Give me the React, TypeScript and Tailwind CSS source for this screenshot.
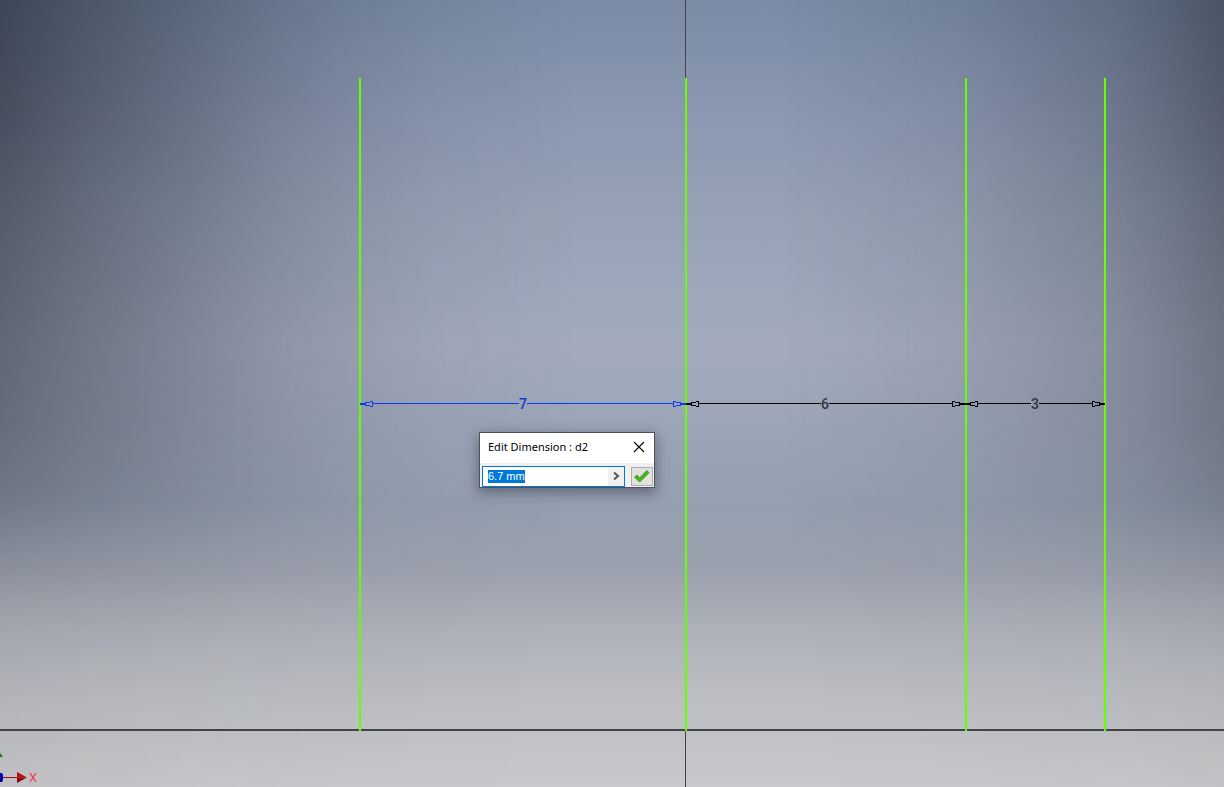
import { useEffect, useRef, useState } from "react";

interface Dimension {
  id: string;
  from: number;
  to: number;
  label: string;
  active?: boolean;
}

const DIM_Y = 403;
const sketchLines = [359, 685, 965, 1104];

const dimensions: Dimension[] = [
  { id: "d2", from: 360, to: 686, label: "7", active: true },
  { id: "d1", from: 686, to: 965, label: "6" },
  { id: "d0", from: 965, to: 1105, label: "3" },
];

function Arrow({ x, flip }: { x: number; flip?: boolean }) {
  return (
    <g
      transform={`translate(${x} ${DIM_Y})${flip ? " scale(-1 1)" : ""}`}
      shapeRendering="crispEdges"
      fill="currentColor"
    >
      <rect x="0" y="0" width="6" height="2" />
      <rect x="5" y="-1" width="5" height="1" />
      <rect x="5" y="2" width="5" height="1" />
      <rect x="10" y="-2" width="3" height="1" />
      <rect x="10" y="3" width="3" height="1" />
      <rect x="12" y="-2" width="1" height="6" />
    </g>
  );
}

function DimensionMark({ dim }: { dim: Dimension }) {
  const mid = Math.floor((dim.from + dim.to) / 2);
  return (
    <g className={dim.active ? "text-[#0a3cf0]" : "text-black"}>
      <g fill="currentColor" shapeRendering="crispEdges">
        <rect x={dim.from + 12} y={DIM_Y} width={mid - 4 - dim.from - 12} height="1" />
        <rect x={mid + 4} y={DIM_Y} width={dim.to - 12 - mid - 4} height="1" />
      </g>
      <Arrow x={dim.from} />
      <Arrow x={dim.to} flip />
      <text
        x={mid}
        y={DIM_Y + 6}
        textAnchor="middle"
        className={
          dim.active
            ? "fill-[#1438c8] font-[Roboto,sans-serif] text-[14px] font-medium"
            : "fill-[#30353d] font-[Roboto,sans-serif] text-[14px] font-medium"
        }
      >
        {dim.label}
      </text>
    </g>
  );
}

function Sketch() {
  return (
    <svg
      className="absolute inset-0 h-full w-full"
      viewBox="0 0 1224 787"
      preserveAspectRatio="xMidYMid slice"
      aria-label="Sketch"
    >
      {/* Axes */}
      <g fill="#434346" shapeRendering="crispEdges">
        <rect x="685" y="0" width="1" height="787" />
        <rect x="0" y="729" width="1224" height="2" />
      </g>

      {/* Sketch lines */}
      <g fill="#64ff00" shapeRendering="crispEdges">
        {sketchLines.map((x) => (
          <rect key={x} x={x} y="78" width="2" height="653" />
        ))}
      </g>

      {dimensions.map((dim) => (
        <DimensionMark key={dim.id} dim={dim} />
      ))}

      {/* Origin triad */}
      <rect x="0" y="737" width="1" height="1" fill="#4be24b" />
      <path d="M0 753l3 4H0z" fill="#0a7d14" />
      <rect x="3" y="777" width="14" height="1" fill="#a01010" />
      <path d="M0 773h2l1 2v5l-1 2H0z" fill="#0000a8" />
      <path d="M17 772l10 5.500H17z" fill="#c00a0a" />
      <path d="M17 777.500h10L17 783z" fill="#8c0808" />
      <text
        x="33"
        y="782"
        textAnchor="middle"
        className="fill-[#f03c3c] font-[Roboto,sans-serif] text-[13px]"
      >
        X
      </text>
    </svg>
  );
}

function EditDimensionDialog() {
  const [value, setValue] = useState("6.7 mm");
  const inputRef = useRef<HTMLInputElement>(null);

  useEffect(() => {
    inputRef.current?.focus();
    inputRef.current?.select();
  }, []);

  return (
    <div
      role="dialog"
      aria-labelledby="dialog-title"
      className="absolute top-[432px] left-[479px] w-[176px] border border-[#4c525c] bg-[#f0f0f0] font-['Noto_Sans',sans-serif] text-black shadow-[0_4px_12px_1px_rgba(20,25,40,0.4)]"
    >
      <div className="flex h-[30px] items-center justify-between bg-white pr-[7px] pb-[2px] pl-2">
        <h1 id="dialog-title" className="text-[11px] whitespace-nowrap">
          Edit Dimension : d2
        </h1>
        <button type="button" aria-label="Close" className="flex h-4 w-4 items-center justify-center">
          <svg width="12" height="12" viewBox="0 0 12 12" stroke="#000" strokeWidth="1.1">
            <path d="M1 1l10 10M11 1L1 11" />
          </svg>
        </button>
      </div>

      <form
        className="flex h-6 items-center pt-[2px] pr-px pl-[2px]"
        onSubmit={(e) => e.preventDefault()}
      >
        <div className="flex h-[21px] flex-1 items-center border border-[#0078d7] bg-white pl-[5px]">
          <input
            ref={inputRef}
            aria-label="Dimension value"
            value={value}
            onChange={(e) => setValue(e.target.value)}
            className="h-[13px] w-0 flex-1 font-['Liberation_Sans',sans-serif] text-[11px] leading-[13px] outline-none selection:bg-[#0078d7] selection:text-white"
          />
          <button
            type="button"
            aria-label="More options"
            className="flex h-full w-4 items-center justify-center bg-[#f0f0f0]"
          >
            <svg width="7" height="8" viewBox="0 0 7 8" fill="none" stroke="#555" strokeWidth="2">
              <path d="M1 0.500L5 4L1 7.500" />
            </svg>
          </button>
        </div>
        <button
          type="submit"
          aria-label="OK"
          className="ml-[6px] flex h-[19px] w-[22px] items-center justify-center border border-[#adadad] bg-[#e1e1e1]"
        >
          <svg width="16" height="13" viewBox="0 0 16 13">
            <path
              d="M0.500 7.200L3 5l2.700 2.900L12.700 0.600 15 2.700 5.700 12z"
              fill="#45bb18"
              stroke="#2f8f12"
              strokeWidth="0.8"
            />
          </svg>
        </button>
      </form>
    </div>
  );
}

export default function App() {
  return (
    <main className="relative min-h-screen overflow-hidden bg-[linear-gradient(to_bottom,#7a8ba5_0%,#8b97b1_14%,#97a2b6_28%,#a3aabe_44%,#9ca5b8_54%,#959fb0_64%,#9ba1ae_72%,#aeb1b9_80%,#bbbdc1_88%,#c2c3c6_94%,#c9c9cd_100%)]">
      {/* Darker sides, fading out towards the floor */}
      <div className="absolute inset-0 bg-[linear-gradient(to_right,rgba(20,24,32,0.6)_0%,rgba(20,24,32,0.46)_7%,rgba(20,24,32,0.32)_15%,rgba(20,24,32,0.2)_22%,rgba(20,24,32,0.11)_29%,rgba(20,24,32,0.05)_36%,rgba(20,24,32,0)_47%,rgba(20,24,32,0)_64%,rgba(20,24,32,0.09)_78%,rgba(20,24,32,0.24)_90%,rgba(20,24,32,0.35)_95%,rgba(20,24,32,0.48)_100%)] [mask-image:linear-gradient(to_bottom,#000_0%,rgba(0,0,0,0.97)_13%,rgba(0,0,0,0.86)_25%,rgba(0,0,0,0.76)_45%,rgba(0,0,0,0.67)_54%,rgba(0,0,0,0.5)_63%,rgba(0,0,0,0.24)_71%,rgba(0,0,0,0.15)_76%,rgba(0,0,0,0.1)_83%,rgba(0,0,0,0.07)_100%)]" />
      <Sketch />
      <EditDimensionDialog />
    </main>
  );
}
